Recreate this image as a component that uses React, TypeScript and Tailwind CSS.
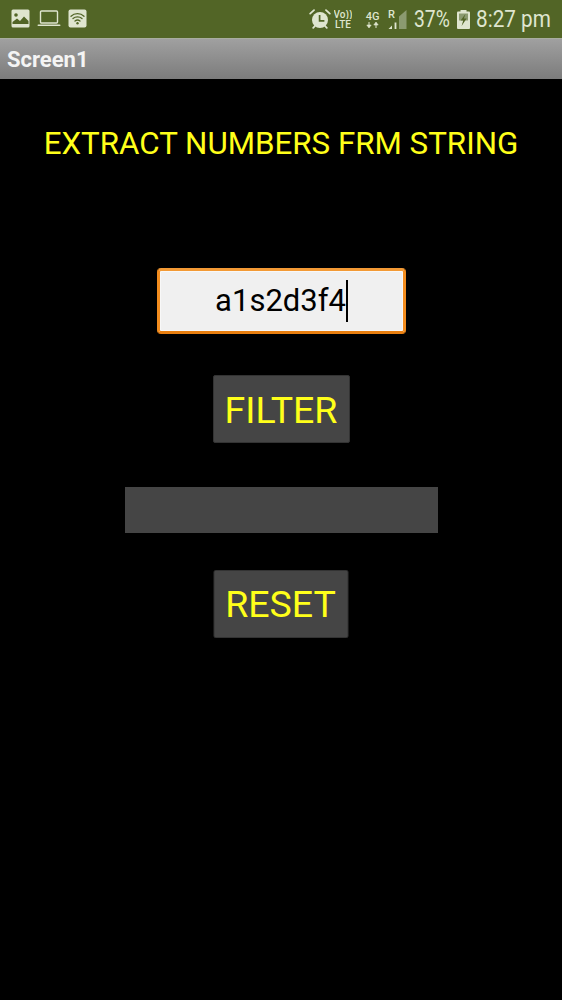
import type { ReactNode } from 'react';

const ROBOTO = "font-['Roboto',sans-serif]";

function ImageIcon() {
  return (
    <svg width="19" height="19" viewBox="0 0 19 19">
      <rect x="0.5" y="0.5" width="18" height="18" rx="1.5" fill="#dfe5cf" />
      <circle cx="5" cy="6" r="1.8" fill="#526526" />
      <path d="M1.5 15 L1.5 13 L6 9.5 L9 12 L13 7.5 L17.5 12 L17.5 15 Z" fill="#526526" />
    </svg>
  );
}

function LaptopIcon() {
  return (
    <svg width="24" height="19" viewBox="0 0 24 19">
      <rect x="3.5" y="2" width="17" height="12" rx="1" fill="none" stroke="#dfe5cf" strokeWidth="1.4" />
      <rect x="0.5" y="15.5" width="23" height="1.6" rx="0.8" fill="#dfe5cf" />
    </svg>
  );
}

function WifiIcon() {
  return (
    <svg width="19" height="19" viewBox="0 0 19 19">
      <rect x="0.5" y="0.5" width="18" height="18" rx="2" fill="#dfe5cf" />
      <g fill="none" stroke="#526526" strokeWidth="1.3" strokeLinecap="round">
        <path d="M3 7.2 C6.5 3.8 12.5 3.8 16 7.2" />
        <path d="M5 9.6 C7.5 7.4 11.5 7.4 14 9.6" />
        <path d="M7 12 C8.5 10.8 10.5 10.8 12 12" />
      </g>
      <circle cx="9.5" cy="14.2" r="1.2" fill="#526526" />
    </svg>
  );
}

function AlarmIcon() {
  return (
    <svg width="22" height="20" viewBox="0 0 22 20">
      <circle cx="11" cy="11" r="8" fill="#dfe5cf" />
      <path d="M10.6 6 V11.8 H15.4" fill="none" stroke="#526526" strokeWidth="1.7" />
      <path d="M1.2 4.6 L5 1.2 M20.8 4.6 L17 1.2 M4.2 18.8 L5.8 17.2 M17.8 18.8 L16.2 17.2" stroke="#dfe5cf" strokeWidth="1.8" strokeLinecap="round" />
    </svg>
  );
}

function SignalIcon() {
  return (
    <svg width="19" height="19" viewBox="0 0 19 19">
      <path d="M18.5 0 V19 H11 V6.5 Z" fill="#8b9a70" />
      <path d="M0.5 19 L4 15.5 V19 Z" fill="#dfe5cf" />
      <rect x="6.6" y="12.5" width="1.8" height="6.5" fill="#dfe5cf" />
    </svg>
  );
}

function BatteryIcon() {
  return (
    <svg width="13" height="19" viewBox="0 0 13 19">
      <rect x="3.5" y="0" width="6" height="2" fill="#dfe5cf" />
      <rect x="0" y="1.5" width="13" height="17.5" rx="1" fill="#dfe5cf" />
      <rect x="2" y="3.5" width="9" height="7" fill="#8b9a70" />
      <path d="M8.4 4 L3.6 10.6 H6.2 L4.6 16 L9.6 8.6 H6.9 Z" fill="#526526" />
    </svg>
  );
}

function DataArrows() {
  return (
    <svg width="13" height="6" viewBox="0 0 13 6">
      <path d="M3 0 V3 H5.2 L3 6 L0.8 3 H3 Z" fill="#dfe5cf" stroke="#dfe5cf" strokeWidth="0.6" />
      <path d="M10 6 V3 H12.2 L10 0 L7.8 3 H10 Z" fill="#dfe5cf" stroke="#dfe5cf" strokeWidth="0.6" />
    </svg>
  );
}

function StatusBar() {
  return (
    <div className={`flex h-[38px] items-center justify-between bg-[#526526] pl-[11px] pr-[12px] text-[#dfe5cf] ${ROBOTO}`}>
      <div className="flex items-center gap-[7px] pb-[1px]">
        <ImageIcon />
        <LaptopIcon />
        <WifiIcon />
      </div>
      <div className="flex items-center">
        <AlarmIcon />
        <div className="ml-[3px] flex w-[18px] flex-col items-center gap-[1px] text-[10px] font-medium leading-[9px]">
          <span className="h-[9px] overflow-hidden">Vo))</span>
          <span className="h-[9px] overflow-hidden">LTE</span>
        </div>
        <div className="ml-[13px] flex w-[15px] flex-col items-center text-[11px] font-medium leading-[11px]">
          <span>4G</span>
          <DataArrows />
        </div>
        <div className="relative ml-[8px]">
          <SignalIcon />
          <span className="absolute left-0 top-[-1px] text-[11px] font-medium leading-[11px]">R</span>
        </div>
        <span className="ml-[7px] w-[36px] origin-left scale-x-[0.84] whitespace-nowrap text-[23px] leading-none">37%</span>
        <div className="ml-[7px]">
          <BatteryIcon />
        </div>
        <span className="ml-[6px] w-[74px] origin-left scale-x-[0.9] whitespace-nowrap text-[23px] leading-none">8:27 pm</span>
      </div>
    </div>
  );
}

function TitleBar() {
  return (
    <div className={`flex h-[41px] items-center border-t border-[#a9ad9f] bg-gradient-to-b from-[#a0a0a0] to-[#7c7c7c] pl-[7px] text-[22px] font-bold text-[#f4f4f4] ${ROBOTO}`}>
      Screen1
    </div>
  );
}

function YellowButton({ className, children }: { className: string; children: ReactNode }) {
  return (
    <button
      type="button"
      className={`flex h-[68px] items-center justify-center rounded-[2px] border border-[#333] bg-[#454545] text-[37.5px] text-[#ffff1a] ${ROBOTO} ${className}`}
    >
      {children}
    </button>
  );
}

export default function App() {
  return (
    <div className="flex h-[1000px] w-[562px] flex-col overflow-hidden bg-black">
      <StatusBar />
      <TitleBar />
      <main className={`flex flex-col items-center ${ROBOTO}`}>
        <h1 className="mt-[47px] text-[31.3px] font-normal leading-[36px] text-[#ffff1a]">EXTRACT NUMBERS FRM STRING</h1>
        <div className="ml-[1px] mt-[106px] flex h-[66px] w-[249px] items-center justify-center rounded-[4px] border-[3px] border-[#f28c1e] border-t-[#f39a35] border-b-[#e97f10] bg-[#f0f0f0] text-[31px] text-black shadow-[inset_0_0_0_1px_#f8f8f8]">
          <span>a1s2d3f4</span>
          <span className="h-[42px] w-[2px] bg-black" />
        </div>
        <YellowButton className="mt-[41px] w-[137px] pt-[2px]">FILTER</YellowButton>
        <div className="mt-[44px] h-[46px] w-[313px] bg-[#454545]" />
        <YellowButton className="mt-[37px] w-[135px] -translate-x-[0.5px]">RESET</YellowButton>
      </main>
    </div>
  );
}
